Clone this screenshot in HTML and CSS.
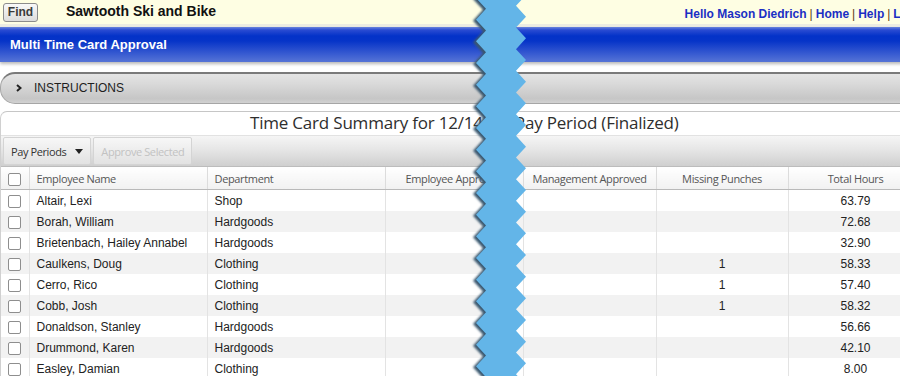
FILE: index.html
```html
<!DOCTYPE html>
<html>
<head>
<meta charset="utf-8">
<link rel="stylesheet" href="styles.css">
</head>
<body>
<div class="page">
  <header class="topbar">
    <button class="find">Find</button>
    <span class="company">Sawtooth Ski and Bike</span>
    <nav class="usernav"><a>Hello Mason Diedrich</a><span class="sep">|</span><a>Home</a><span class="sep">|</span><a>Help</a><span class="sep">|</span><a>Logout</a></nav>
  </header>
  <div class="titlebar">Multi Time Card Approval</div>
  <div class="instructions">
    <svg class="chev" width="6" height="8" viewBox="0 0 6 8"><path d="M1 1 L4.5 4 L1 7" fill="none" stroke="#222" stroke-width="2"/></svg>
    <span>INSTRUCTIONS</span>
  </div>
  <section class="panel">
    <h1 class="summary"><span>Time Card Summary for 12/14</span><span class="gap"></span><span>Pay Period (Finalized)</span></h1>
    <div class="toolbar">
      <div class="tbtn">Pay Periods <span class="caret"></span></div>
      <div class="tbtn disabled">Approve Selected</div>
    </div>
    <table class="grid">
      <colgroup>
        <col class="c-cb"><col class="c-name"><col class="c-dept"><col class="c-emp"><col class="c-mgmt"><col class="c-miss"><col class="c-hours">
      </colgroup>
      <thead>
        <tr>
          <th class="cbcell"><span class="cb"></span></th>
          <th class="left">Employee Name</th>
          <th class="left">Department</th>
          <th>Employee Approved</th>
          <th>Management Approved</th>
          <th>Missing Punches</th>
          <th>Total Hours</th>
        </tr>
      </thead>
      <tbody>
        <tr><td class="cbcell"><span class="cb"></span></td><td>Altair, Lexi</td><td>Shop</td><td></td><td></td><td class="num"></td><td class="num">63.79</td></tr>
        <tr><td class="cbcell"><span class="cb"></span></td><td>Borah, William</td><td>Hardgoods</td><td></td><td></td><td class="num"></td><td class="num">72.68</td></tr>
        <tr><td class="cbcell"><span class="cb"></span></td><td>Brietenbach, Hailey Annabel</td><td>Hardgoods</td><td></td><td></td><td class="num"></td><td class="num">32.90</td></tr>
        <tr><td class="cbcell"><span class="cb"></span></td><td>Caulkens, Doug</td><td>Clothing</td><td></td><td></td><td class="num">1</td><td class="num">58.33</td></tr>
        <tr><td class="cbcell"><span class="cb"></span></td><td>Cerro, Rico</td><td>Clothing</td><td></td><td></td><td class="num">1</td><td class="num">57.40</td></tr>
        <tr><td class="cbcell"><span class="cb"></span></td><td>Cobb, Josh</td><td>Clothing</td><td></td><td></td><td class="num">1</td><td class="num">58.32</td></tr>
        <tr><td class="cbcell"><span class="cb"></span></td><td>Donaldson, Stanley</td><td>Hardgoods</td><td></td><td></td><td class="num"></td><td class="num">56.66</td></tr>
        <tr><td class="cbcell"><span class="cb"></span></td><td>Drummond, Karen</td><td>Hardgoods</td><td></td><td></td><td class="num"></td><td class="num">42.10</td></tr>
        <tr><td class="cbcell"><span class="cb"></span></td><td>Easley, Damian</td><td>Clothing</td><td></td><td></td><td class="num"></td><td class="num">8.00</td></tr>
      </tbody>
    </table>
  </section>
  <svg class="tear" width="900" height="376" viewBox="0 0 900 376">
    <defs>
      <filter id="soft" x="-20%" y="-5%" width="140%" height="110%">
        <feGaussianBlur stdDeviation="1.1"/>
      </filter>
    </defs>
    <g transform="translate(-3,1)" filter="url(#soft)">
      <polygon class="tear-shadow" points="481,-10 476,-2 486,8.83 476,19.67 486,30.5 476,41.33 486,52.17 476,63 486,73.83 476,84.67 486,95.5 476,106.33 486,117.17 476,128 486,138.83 476,149.67 486,160.5 476,171.33 486,182.17 476,193 486,203.83 476,214.67 486,225.5 476,236.33 486,247.17 476,258 486,268.83 476,279.67 486,290.5 476,301.33 486,312.17 476,323 486,333.83 476,344.67 486,355.5 476,366.33 486,377.17 476,388 500,390 500,-10"/>
    </g>
    <polygon class="tear-band" points="481,-10 476,-2 486,8.83 476,19.67 486,30.5 476,41.33 486,52.17 476,63 486,73.83 476,84.67 486,95.5 476,106.33 486,117.17 476,128 486,138.83 476,149.67 486,160.5 476,171.33 486,182.17 476,193 486,203.83 476,214.67 486,225.5 476,236.33 486,247.17 476,258 486,268.83 476,279.67 486,290.5 476,301.33 486,312.17 476,323 486,333.83 476,344.67 486,355.5 476,366.33 486,377.17 476,388 526,385 516,374.17 526,363.33 516,352.5 526,341.67 516,330.83 526,320 516,309.17 526,298.33 516,287.5 526,276.67 516,265.83 526,255 516,244.17 526,233.33 516,222.5 526,211.67 516,200.83 526,190 516,179.17 526,168.33 516,157.5 526,146.67 516,135.83 526,125 516,114.17 526,103.33 516,92.5 526,81.67 516,70.83 526,60 516,49.17 526,38.33 516,27.5 526,16.67 516,5.83 526,-5 521,-10"/>
  </svg>
</div>
</body>
</html>
```

FILE: styles.css
```css
html, body {
  margin: 0;
  padding: 0;
  width: 900px;
  height: 376px;
  overflow: hidden;
  background: #ffffff;
}

.page {
  position: relative;
  width: 945px;
  height: 376px;
  font-family: "Liberation Sans", Arial, sans-serif;
  color: #1e1e1e;
}

/* top bar */
.topbar {
  display: flex;
  align-items: center;
  height: 24px;
  background: #fefee3;
  border-bottom: 3px solid #ecece2;
}

.find {
  margin-left: 3px;
  width: 35px;
  height: 19px;
  padding: 0;
  font-family: "Liberation Sans", Arial, sans-serif;
  font-weight: bold;
  font-size: 12px;
  color: #3a3a3a;
  border: 1px solid #8c8c8c;
  border-radius: 3px;
  background: linear-gradient(#f9f9f9, #dcdcdc);
}

.company {
  margin-left: 28px;
  font-weight: bold;
  font-size: 14px;
  color: #111111;
  margin-top: -2px;
}

.usernav {
  margin-left: auto;
  padding-right: 11px;
  padding-top: 3px;
  font-weight: bold;
  font-size: 12px;
  white-space: nowrap;
}

.usernav a {
  color: #1b2fc4;
}

.usernav .sep {
  color: #5a3a10;
  margin: 0 3px;
  font-weight: normal;
}

/* blue title bar */
.titlebar {
  height: 35px;
  line-height: 35px;
  padding-left: 10px;
  color: #ffffff;
  font-weight: bold;
  font-size: 13px;
  background: linear-gradient(to bottom, #6a84dc 0px, #2a4bd2 3px, #0332c8 9px, #0634c8 14px, #2d52cf 24px, #5674d6 35px);
  box-shadow: 0 2px 3px rgba(0, 0, 0, 0.28);
}

/* instructions */
.instructions {
  display: flex;
  align-items: center;
  height: 29px;
  margin-top: 10px;
  margin-right: 10px;
  border: 1px solid #a6a6a6;
  border-top: 2px solid #7a7a7a;
  border-radius: 15px;
  background: linear-gradient(to bottom, #e4e4e4 0%, #d9d9d9 35%, #c6c6c6 85%, #d2d2d2 100%);
  font-size: 12px;
  color: #1e1e1e;
}

.chev {
  margin-left: 15px;
  margin-right: 12px;
  margin-top: -1px;
}

.instructions span {
  margin-top: -1px;
}

/* panel */
.panel {
  margin-top: 7px;
  border-top: 1px solid #c6c6c6;
  border-left: 1px solid #d0d0d0;
  border-top-left-radius: 7px;
}

.summary {
  display: flex;
  margin: 0;
  padding-left: 249px;
  height: 23px;
  line-height: 22px;
  font-family: "Open Sans", "Noto Sans", sans-serif;
  font-weight: normal;
  font-size: 17px;
  letter-spacing: -0.2px;
  color: #2e2e2e;
}

.summary .gap {
  width: 32px;
}

.toolbar {
  display: flex;
  align-items: stretch;
  gap: 2px;
  height: 30px;
  padding-left: 2px;
  border-top: 1px solid #e2e2e2;
  border-bottom: 1px solid #bcbcbc;
  background: linear-gradient(to bottom, #f5f5f5, #e6e6e6 45%, #cfcfcf);
}

.tbtn {
  display: flex;
  align-items: center;
  margin: 1px 0;
  padding: 0 7px;
  border: 1px solid #d4d4d4;
  border-radius: 2px;
  background: linear-gradient(to bottom, #f7f7f7, #e2e2e2);
  font-family: "Open Sans", "Noto Sans", sans-serif;
  font-size: 11px;
  letter-spacing: -0.4px;
  color: #333333;
}

.tbtn.disabled {
  color: #c2c2c2;
}

.caret {
  display: inline-block;
  width: 0;
  height: 0;
  margin-left: 9px;
  border-left: 4px solid transparent;
  border-right: 4px solid transparent;
  border-top: 5px solid #222222;
}

/* grid */
.grid {
  border-collapse: collapse;
  table-layout: fixed;
  width: 922px;
}

.c-cb { width: 28px; }
.c-name { width: 178px; }
.c-dept { width: 178px; }
.c-emp { width: 138px; }
.c-mgmt { width: 133px; }
.c-miss { width: 132px; }
.c-hours { width: 135px; }

.grid th {
  height: 22px;
  padding: 0;
  font-family: "Open Sans", "Noto Sans", sans-serif;
  font-weight: normal;
  font-size: 11px;
  letter-spacing: -0.35px;
  color: #555555;
  text-align: center;
  white-space: nowrap;
  background: linear-gradient(to bottom, #ffffff, #f1f1f1);
  border-right: 1px solid #dcdcdc;
  border-bottom: 1px solid #b9b9b9;
}

.grid th.left {
  text-align: left;
  padding-left: 7px;
}

.grid td {
  height: 21px;
  padding: 0 0 0 7px;
  font-size: 12px;
  color: #222222;
  white-space: nowrap;
  border-right: 1px solid #e3e3e3;
}

.grid td.num {
  text-align: center;
  padding: 0;
}

.grid tbody tr:nth-child(even) td {
  background: #f2f2f2;
}

.grid .cbcell {
  padding: 0;
  text-align: center;
}

.cb {
  display: inline-block;
  width: 11px;
  height: 11px;
  border: 1px solid #8e8e8e;
  border-radius: 2px;
  background: #ffffff;
  vertical-align: middle;
}

/* torn-screenshot overlay */
.tear {
  position: absolute;
  left: 0;
  top: 0;
  pointer-events: none;
}

.tear-band {
  fill: #63b5e8;
}

.tear-shadow {
  fill: #3a5870;
}
```
